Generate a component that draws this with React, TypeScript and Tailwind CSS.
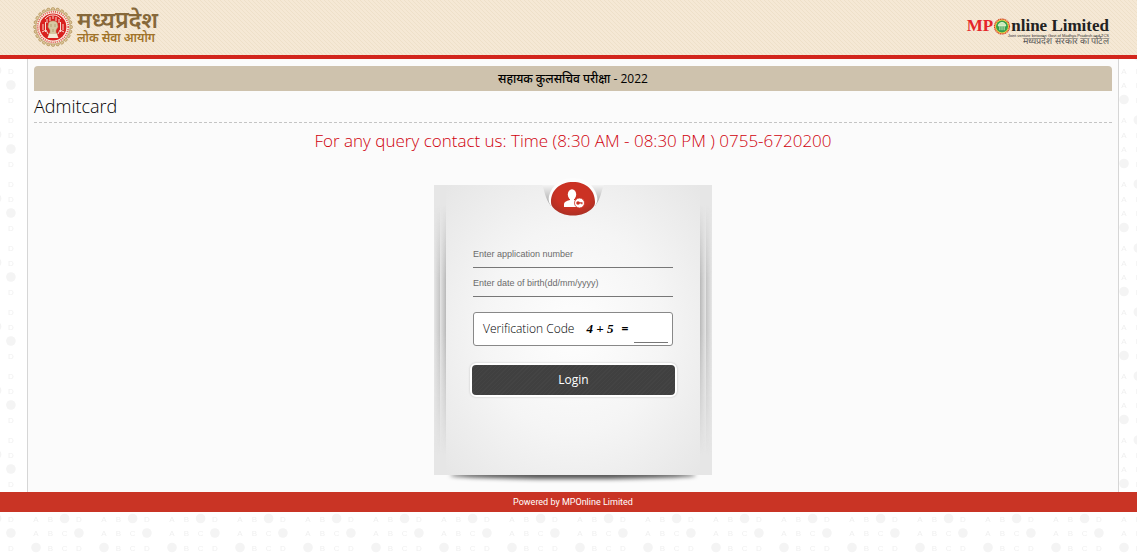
import { useState } from "react";

const TEETH = Array.from({ length: 24 }, (_, i) => i * 15);
const ROWS = ["B", "C", "D", "A"];
const COLS = ["A", "B", "C", "D"];

// faint OMR answer sheet behind the page
const SheetPattern = () => (
  <svg className="absolute inset-0 -z-10 h-full w-full" aria-hidden="true">
    <defs>
      <pattern id="omr" width="68" height="64" x="29" y="49" patternUnits="userSpaceOnUse">
        {ROWS.map((filled, r) =>
          COLS.map((letter, c) => (
            <g key={`${r}-${c}`}>
              {filled === letter ? (
                <circle cx={7 + c * 14.3} cy={7 + r * 14.5} r="4.8" fill="#f4f4f4" />
              ) : (
                <text
                  x={7 + c * 14.3}
                  y={10 + r * 14.5}
                  fontSize="8"
                  textAnchor="middle"
                  fill="#f0f0f0"
                  fontFamily="Liberation Sans, sans-serif"
                >
                  {letter}
                </text>
              )}
            </g>
          )),
        )}
      </pattern>
      <pattern id="weave" width="4" height="4" patternUnits="userSpaceOnUse">
        <path d="M0 0l4 4" stroke="#ebdcc4" strokeWidth="0.7" />
      </pattern>
    </defs>
    <rect width="100%" height="100%" fill="url(#omr)" />
  </svg>
);

const Emblem = () => (
  <svg viewBox="0 0 40 40" className="h-10 w-10" aria-hidden="true">
    {TEETH.map((a) => (
      <circle
        key={a}
        cx="20"
        cy="2.2"
        r="1.7"
        fill="#dcc596"
        stroke="#b3935c"
        strokeWidth="0.7"
        transform={`rotate(${a} 20 20)`}
      />
    ))}
    <circle cx="20" cy="20" r="17" fill="#fbf3e6" stroke="#b3935c" strokeWidth="0.7" />
    <circle cx="20" cy="20" r="15.3" fill="none" stroke="#e0625a" strokeWidth="1.8" strokeDasharray="1.2 0.9" />
    <circle cx="20" cy="20" r="13.4" fill="#d9211f" />
    <path
      d="M12 12c2-3 5-4 8-4s6 1 8 4M10 17v6M12.5 15v10M30 17v6M27.5 15v10M14 12v4M17 10v4M20 9v3M23 10v4M26 12v4M9 25l4-2 2 4M31 25l-4-2-2 4"
      fill="none"
      stroke="#f7dcd2"
      strokeWidth="1"
    />
    <path
      d="M15.5 17c0-2 2-3 4.5-3s4.5 1 4.5 3l.5 3-2 3v3h1v2h-8v-2h1v-3l-2-3z"
      fill="#d6c8a2"
      stroke="#b59d6c"
      strokeWidth="0.5"
    />
    <path d="M16 27h8l1.5 4h-11z" fill="#f4ead6" />
    <path d="M18 17v3M22 17v3M20 22v3" stroke="#a5925f" strokeWidth="0.7" />
  </svg>
);

const RoundSeal = () => (
  <svg viewBox="0 0 16 16" className="h-[17px] w-[18px] shrink-0" aria-hidden="true">
    <circle cx="8" cy="8" r="7" fill="#f5d64a" stroke="#d23a2a" strokeWidth="1.2" strokeDasharray="1.2 0.5" />
    <circle cx="8" cy="8" r="5.6" fill="#35a04a" />
    <path
      d="M4.5 7.5c0-2 1.5-3.3 3.5-3.3s3.5 1.3 3.5 3.3zM6 8v3.5M8 8v3.5M10 8v3.5"
      fill="#c9ebb8"
      stroke="#e6f6dc"
      strokeWidth="0.8"
    />
  </svg>
);

const Badge = () => (
  <svg
    viewBox="0 0 64 44"
    className="absolute -top-2 left-1/2 h-11 w-16 -translate-x-1/2"
    aria-hidden="true"
  >
    <defs>
      <linearGradient id="notch" x1="0" y1="0" x2="0" y2="1">
        <stop offset="0" stopColor="#f4f4f4" />
        <stop offset="1" stopColor="#a0a0a0" />
      </linearGradient>
      <radialGradient id="red" cx="0.5" cy="0.4" r="0.62">
        <stop offset="0.6" stopColor="#cb3224" />
        <stop offset="1" stopColor="#aa3025" />
      </radialGradient>
    </defs>
    <path d="M1 8h62c-3 6-3 14-9 21H10C4 22 4 14 1 8z" fill="url(#notch)" />
    <path d="M11 30C8 27 7 23 8 19 11 8 20 1 32 1s21 7 24 18c1 4 0 8-3 11z" fill="#fdfdfd" />
    <path
      d="M10 25C10 13 19 5 32 5s22 8 22 20c0 2-.5 4-2 5.5C47 36 40 38.500 32 38.500S17 36 12 30.500C10.5 29 10 27 10 25z"
      fill="url(#red)"
    />
    <ellipse cx="31" cy="17.5" rx="4.2" ry="5.2" fill="#fff" />
    <path d="M23 30v-3c0-2 2-3 6-4v-2h4v2c4 1 6 2 6 4v3z" fill="#fff" />
    <circle cx="38.5" cy="26" r="5" fill="#fff" stroke="#cb3224" strokeWidth="0.8" />
    <circle cx="37" cy="26" r="1.8" fill="#cb3224" />
    <path d="M38 25.3h3.500v2h-1.200v-.8H38z" fill="#cb3224" />
  </svg>
);

// soft vertical folds along both sides of the card
const foldClass =
  "absolute inset-y-5 [mask-image:linear-gradient(to_bottom,transparent,black_30%,black_50%,transparent)]";

const inputClass =
  "block w-full border-b border-[#777] bg-transparent text-[9px] leading-4 text-gray-700 outline-none placeholder:text-[#6b6b6b] placeholder:opacity-100 font-['Liberation_Sans',sans-serif]";

export default function App() {
  const [appNo, setAppNo] = useState("");
  const [dob, setDob] = useState("");
  const [answer, setAnswer] = useState("");

  return (
    <div className="relative isolate min-h-screen bg-white font-['Open_Sans','Noto_Sans',sans-serif] text-black">
      <SheetPattern />
      <header className="border-b-4 border-[#d2251c] bg-[#f5e8d5]">
        <div className="relative flex h-[55px] items-start justify-between pr-7 pl-[33px]">
          <svg className="absolute inset-0 h-full w-full" aria-hidden="true">
            <rect width="100%" height="100%" fill="url(#weave)" />
          </svg>
          <a href="#" className="relative flex gap-1 pt-[7px]">
            <Emblem />
            <span className="flex flex-col font-semibold text-[#86683a]">
              <span className="text-[23px] leading-6">मध्यप्रदेश</span>
              <span className="text-xs leading-[14px] text-[#a07228]">लोक सेवा आयोग</span>
            </span>
          </a>
          <a
            href="#"
            className="relative flex flex-col items-end pt-[18px] font-['Liberation_Serif',serif]"
          >
            <span className="flex h-4 items-center text-[17px] leading-4 font-bold text-[#222]">
              <span className="text-[#e5252a]">MP</span>
              <RoundSeal />
              nline Limited
            </span>
            <span className="font-['Liberation_Sans',sans-serif] text-[4px] leading-[3px] text-[#333]">
              Joint venture between Govt of Madhya Pradesh and TCS
            </span>
            <span className="text-[9px] leading-2 text-[#555]">मध्यप्रदेश सरकार का पोर्टल</span>
          </a>
        </div>
      </header>

      <main className="mr-[18px] ml-[27px] border-x border-[#d6d6d6] bg-[#fbfbfb] px-1.5 pt-[7px] pb-[17px]">
        <h1 className="rounded-t bg-[#cec2ad] text-center text-xs leading-[25px] font-medium">
          सहायक कुलसचिव परीक्षा - 2022
        </h1>
        <h2 className="border-b border-dashed border-[#c4c4c4] text-lg leading-[31px] font-light">
          Admitcard
        </h2>
        <p className="pt-1 text-center text-[17px] leading-7 font-light text-[#d0000b]">
          For any query contact us: Time (8:30 AM - 08:30 PM ) 0755-6720200
        </p>

        <section className="relative mx-auto mt-[30px] h-[290px] w-[278px]">
          <div className="absolute inset-x-4 -bottom-1 h-2 rounded-[50%] bg-[#555] blur-[2px]" />
          <div className="absolute inset-0 bg-[#e6e6e6]">
            <div className={`${foldClass} left-0 w-1.5 bg-linear-to-r from-transparent to-[#c4c4c4]`} />
            <div className={`${foldClass} left-1.5 w-1.5 bg-linear-to-r from-transparent to-[#b8b8b8]`} />
            <div className={`${foldClass} right-1.5 w-1.5 bg-linear-to-l from-transparent to-[#b8b8b8]`} />
            <div className={`${foldClass} right-0 w-1.5 bg-linear-to-l from-transparent to-[#c4c4c4]`} />
          </div>
          <div className="relative mx-3 h-full bg-[radial-gradient(ellipse_at_center,#fefefe,#f5f5f5_50%,#e6e6e6)] px-[27px] pt-[61px]">
            <Badge />
            <form onSubmit={(e) => e.preventDefault()}>
              <input
                type="text"
                aria-label="Application number"
                placeholder="Enter application number"
                value={appNo}
                onChange={(e) => setAppNo(e.target.value)}
                className={`${inputClass} pb-[5px]`}
              />
              <input
                type="text"
                aria-label="Date of birth"
                placeholder="Enter date of birth(dd/mm/yyyy)"
                value={dob}
                onChange={(e) => setDob(e.target.value)}
                className={`${inputClass} pt-[7px] pb-[5px]`}
              />
              <div className="mt-[15px] flex h-[34px] items-center rounded-[3px] border border-[#888] bg-white px-1 pl-[9px]">
                <label htmlFor="code" className="text-xs font-light">
                  Verification Code
                </label>
                <span className="ml-3 font-['Liberation_Serif',serif] text-[13px] font-bold italic">
                  4 + 5
                </span>
                <span className="ml-2 text-xs font-bold">=</span>
                <input
                  id="code"
                  type="text"
                  value={answer}
                  onChange={(e) => setAnswer(e.target.value)}
                  className="mt-2 ml-auto h-5 w-[34px] border-b border-[#777] text-xs outline-none"
                />
              </div>
              <button
                type="submit"
                className="-mx-[3px] mt-[17px] block h-[34px] w-[207px] rounded-md border-2 border-white bg-[#404040] bg-[repeating-linear-gradient(135deg,#404040_0_2px,#444_2px_3px)] text-xs text-white shadow-[0_0_2px_#bbb]"
              >
                Login
              </button>
            </form>
          </div>
        </section>
      </main>

      <footer className="bg-[#c93425] pl-[9px] text-center font-['Roboto',sans-serif] text-[9px] leading-5 text-white">
        Powered by MPOnline Limited
      </footer>
    </div>
  );
}
